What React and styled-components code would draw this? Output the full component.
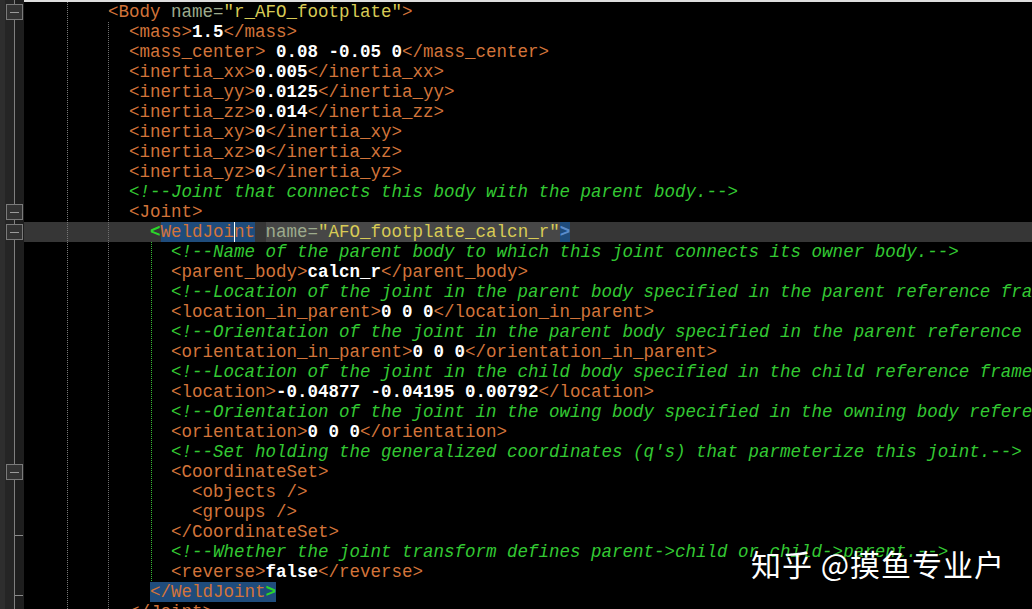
import React from 'react';
import styled, { createGlobalStyle } from 'styled-components';

const Global = createGlobalStyle`
  html, body { margin: 0; padding: 0; background: #000; }
  body { overflow: hidden; }
`;

const Page = styled.div`
  position: relative;
  width: 1032px;
  height: 609px;
  overflow: hidden;
  display: flex;
  background: #000;
`;

const Gutter = styled.div`
  width: 24px;
  flex: none;
  padding-top: 2px;
  display: flex;
  flex-direction: column;
  background: linear-gradient(to right, #2e2e2e 0 5px, #252525 5px 14px, #7f7f7f 14px 15px, #1e1e1e 15px 24px);
`;

const GutterRow = styled.div`
  height: 20px;
  flex: none;
  display: flex;
  align-items: center;
`;

const FoldBox = styled.div`
  box-sizing: border-box;
  margin-left: 6px;
  width: 17px;
  height: 16px;
  border: 1px solid #7a7a7a;
  background: #333;
  display: flex;
  align-items: center;
  justify-content: center;
  &::after {
    content: '';
    width: 9px;
    height: 1px;
    background: #9a9a9a;
  }
`;

const FoldEnd = styled.div`
  align-self: flex-start;
  margin-top: 13px;
  margin-left: 15px;
  width: 8px;
  height: 1px;
  background: #8a8a8a;
`;

const Code = styled.div`
  flex: 1;
  min-width: 0;
  border-top: 2px solid #dedede;
  font-family: "Liberation Mono", "Courier New", monospace;
  font-size: 17.5px;
`;

const guideBg = (guides) =>
  guides.map(g => `linear-gradient(to bottom, ${g.c} 50%, transparent 50%)`).join(', ') || 'none';
const guidePos = (guides) => guides.map(g => `${g.x}px 0`).join(', ') || '0 0';

const Line = styled.div`
  height: 20px;
  line-height: 21px;
  white-space: pre;
  overflow: hidden;
  padding-left: 84px;
  background-color: ${p => (p.$current ? '#363636' : 'transparent')};
  background-image: ${p => guideBg(p.$guides)};
  background-size: 1px 2px;
  background-repeat: repeat-y;
  background-position: ${p => guidePos(p.$guides)};
`;

const Tag = styled.span`color: #d2743a;`;
const Attr = styled.span`color: #9dab8d;`;
const Val = styled.span`color: #d8cb55;`;
const Txt = styled.span`color: #ffffff; font-weight: bold;`;
const Cmt = styled.span`color: #33c933; font-style: italic;`;
const Match = styled.span`color: ${p => p.$c}; font-weight: bold;`;
const Sel = styled.span`
  display: inline-block;
  height: 20px;
  vertical-align: top;
  background: ${p => p.$bg || '#1f4c7c'};
`;
const Cursor = styled.span`
  display: inline-block;
  width: 1px;
  height: 20px;
  margin-right: -1px;
  vertical-align: top;
  background: #ffffff;
`;

const Watermark = styled.div`
  position: absolute;
  left: 751px;
  top: 548px;
  font-family: "Noto Sans CJK SC", sans-serif;
  font-size: 30px;
  line-height: 30px;
  letter-spacing: 1px;
  color: #ffffff;
  white-space: pre;
  text-shadow: 0 0 2px rgba(0,0,0,0.6);
`;

const lines = [
  [0, '<Body name="r_AFO_footplate">'],
  [1, '<mass>1.5</mass>'],
  [1, '<mass_center> 0.08 -0.05 0</mass_center>'],
  [1, '<inertia_xx>0.005</inertia_xx>'],
  [1, '<inertia_yy>0.0125</inertia_yy>'],
  [1, '<inertia_zz>0.014</inertia_zz>'],
  [1, '<inertia_xy>0</inertia_xy>'],
  [1, '<inertia_xz>0</inertia_xz>'],
  [1, '<inertia_yz>0</inertia_yz>'],
  [1, '<!--Joint that connects this body with the parent body.-->'],
  [1, '<Joint>'],
  [2, 'WELD_OPEN'],
  [3, '<!--Name of the parent body to which this joint connects its owner body.-->'],
  [3, '<parent_body>calcn_r</parent_body>'],
  [3, '<!--Location of the joint in the parent body specified in the parent reference frame.-->'],
  [3, '<location_in_parent>0 0 0</location_in_parent>'],
  [3, '<!--Orientation of the joint in the parent body specified in the parent reference frame.-->'],
  [3, '<orientation_in_parent>0 0 0</orientation_in_parent>'],
  [3, '<!--Location of the joint in the child body specified in the child reference frame.-->'],
  [3, '<location>-0.04877 -0.04195 0.00792</location>'],
  [3, '<!--Orientation of the joint in the owing body specified in the owning body reference frame.-->'],
  [3, '<orientation>0 0 0</orientation>'],
  [3, "<!--Set holding the generalized coordinates (q's) that parmeterize this joint.-->"],
  [3, '<CoordinateSet>'],
  [4, '<objects />'],
  [4, '<groups />'],
  [3, '</CoordinateSet>'],
  [3, '<!--Whether the joint transform defines parent->child or child->parent.-->'],
  [3, '<reverse>false</reverse>'],
  [2, 'WELD_CLOSE'],
  [1, '</Joint>'],
];

const folds = { 0: 'box', 10: 'box', 11: 'box', 23: 'box', 26: 'end', 29: 'end' };

function renderTag(t, k) {
  const m = t.match(/^(<\w+)( )(name=)("[^"]*")(>)$/);
  if (m) {
    return (
      <React.Fragment key={k}>
        <Tag>{m[1]}</Tag>{m[2]}<Attr>{m[3]}</Attr><Val>{m[4]}</Val><Tag>{m[5]}</Tag>
      </React.Fragment>
    );
  }
  return <Tag key={k}>{t}</Tag>;
}

function renderContent(text) {
  if (text === 'WELD_OPEN') {
    return (
      <>
        <Match $c="#2ad62a">&lt;</Match>
        <Sel><Tag>WeldJoi</Tag><Cursor /><Tag>nt</Tag></Sel>
        {' '}
        <Sel $bg="#474747"><Attr>name=</Attr><Val>"AFO_footplate_calcn_r"</Val></Sel>
        <Sel><Match $c="#5a8ccc">&gt;</Match></Sel>
      </>
    );
  }
  if (text === 'WELD_CLOSE') {
    return (
      <Sel><Tag>&lt;/WeldJoint</Tag><Match $c="#2ad62a">&gt;</Match></Sel>
    );
  }
  if (text.startsWith('<!--')) return <Cmt>{text}</Cmt>;
  const parts = text.split(/(<[^>]*>)/).filter(Boolean);
  return parts.map((p, i) => (p.startsWith('<') ? renderTag(p, i) : <Txt key={i}>{p}</Txt>));
}

function guidesFor(i) {
  const g = [{ x: 43, c: '#777' }];
  if (i >= 1) g.push({ x: 84, c: '#6f6f6f' });
  if (i >= 12 && i <= 28) g.push({ x: 127, c: '#36b836' });
  return g;
}

export default function App() {
  return (
    <>
      <Global />
      <Page>
        <Gutter>
          {lines.map((_, i) => (
            <GutterRow key={i}>
              {folds[i] === 'box' && <FoldBox />}
              {folds[i] === 'end' && <FoldEnd />}
            </GutterRow>
          ))}
        </Gutter>
        <Code>
          {lines.map(([ind, text], i) => (
            <Line key={i} $current={i === 11} $guides={guidesFor(i)}>
              {'  '.repeat(ind)}
              {renderContent(text)}
            </Line>
          ))}
        </Code>
        <Watermark>知乎 @摸鱼专业户</Watermark>
      </Page>
    </>
  );
}
